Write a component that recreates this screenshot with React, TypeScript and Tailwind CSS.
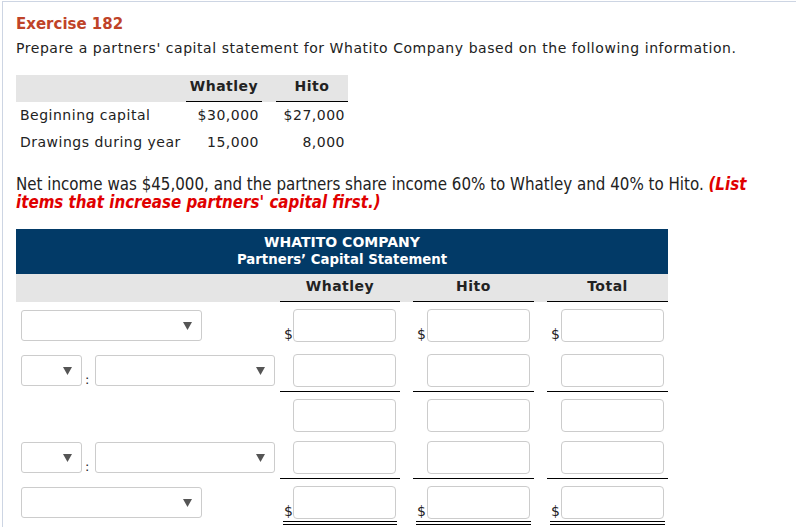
import React from "react";

function Caret() {
  return (
    <svg width="9" height="8" viewBox="0 0 9 8" className="shrink-0">
      <polygon points="0,0 9,0 4.5,8" fill="#555555" />
    </svg>
  );
}

function Select({ size }: { size: "lg" | "sm" | "md" }) {
  const w = size === "lg" ? "w-[181px]" : size === "md" ? "w-[180px]" : "w-[61px]";
  return (
    <div className={`${w} h-[31px] bg-white border border-[#cccccc] rounded-[3px] flex items-center justify-end pr-[9px]`}>
      <Caret />
    </div>
  );
}

type Row = { label: "one" | "two" | "none"; dollar: boolean; line: "none" | "single" | "double"; pb: string };

const rows: Row[] = [
  { label: "one", dollar: true, line: "none", pb: "pb-[4px]" },
  { label: "two", dollar: false, line: "single", pb: "pb-[4px]" },
  { label: "none", dollar: false, line: "none", pb: "pb-[1px]" },
  { label: "two", dollar: false, line: "single", pb: "pb-[4px]" },
  { label: "one", dollar: true, line: "double", pb: "pb-[2px]" },
];

function Money({ row, w }: { row: Row; w: string }) {
  const border =
    row.line === "single" ? "border-b border-black" : "border-b border-transparent";
  return (
    <div className={`${w} ${border} pt-[7px]`}>
      <div className={`${row.pb} flex items-end pl-[4px] pr-[4px]`}>
        <span className="w-[9px] text-[14px] leading-[16px] text-[#222]">{row.dollar ? "$" : ""}</span>
        <div className="ml-auto w-[103px] h-[33px] border border-[#cccccc] rounded-[4px] bg-white" />
      </div>
      {row.line === "double" && <div className="mx-[3px] h-[4px] border-y border-black" />}
    </div>
  );
}

export default function App() {
  return (
    <div className="min-h-screen bg-white pl-[2px] pt-[1px] font-['DejaVu_Sans',Verdana,sans-serif] text-[#222]">
      <div className="border-l border-t border-[#cdd5e3] min-h-[526px] pl-[13px] pt-[12px]">
        <h2 className="text-[15px] leading-[20px] font-bold text-[#bf4328]">Exercise 182</h2>
        <p className="mt-[4px] text-[14px] leading-[20px] tracking-[0.55px]">
          Prepare a partners' capital statement for Whatito Company based on the following information.
        </p>

        {/* given data */}
        <div className="mt-[17px] w-[332px] text-[14px] tracking-[0.5px]">
          <div className="flex h-[27px] bg-[#e5e5e5] font-bold">
            <div className="w-[170px]" />
            <div className="w-[76px] pb-[3px] border-b border-black flex items-center justify-center">Whatley</div>
            <div className="w-[14px]" />
            <div className="w-[72px] pb-[3px] border-b border-black flex items-center justify-center">Hito</div>
          </div>
          <div className="flex h-[27px] items-center">
            <div className="w-[170px] pl-[4px]">Beginning capital</div>
            <div className="w-[76px] text-right pr-[3px]">$30,000</div>
            <div className="w-[14px]" />
            <div className="w-[72px] text-right pr-[3px]">$27,000</div>
          </div>
          <div className="flex h-[27px] items-center">
            <div className="w-[170px] pl-[4px]">Drawings during year</div>
            <div className="w-[76px] text-right pr-[3px]">15,000</div>
            <div className="w-[14px]" />
            <div className="w-[72px] text-right pr-[3px]">8,000</div>
          </div>
        </div>

        <p className="mt-[20px] w-[760px] text-[16.8px] leading-[17.5px] font-['DejaVu_Sans_Condensed','Liberation_Sans_Narrow','DejaVu_Sans',sans-serif] [font-stretch:condensed]">
          Net income was $45,000, and the partners share income 60% to Whatley and 40% to Hito.{" "}
          <span className="font-bold italic text-[#e00000]">(List items that increase partners' capital first.)</span>
        </p>

        {/* statement */}
        <div className="mt-[18px] w-[652px]">
          <div className="bg-[#023a67] h-[45px] pt-[4px] text-center text-white font-bold leading-[18px]">
            <div className="text-[14px]">WHATITO COMPANY</div>
            <div className="text-[13.3px]">Partners’ Capital Statement</div>
          </div>
          <div className="flex h-[28px] bg-[#e5e5e5] font-bold text-[14px] tracking-[0.5px]">
            <div className="w-[264px]" />
            <div className="w-[120px] pb-[3px] border-b border-black flex items-center justify-center">Whatley</div>
            <div className="w-[13px]" />
            <div className="w-[121px] pb-[3px] border-b border-black flex items-center justify-center">Hito</div>
            <div className="w-[13px]" />
            <div className="w-[121px] pb-[3px] border-b border-black flex items-center justify-center">Total</div>
          </div>
          {rows.map((row, i) => (
            <div key={i} className="flex">
              <div className="w-[264px] pl-[5px] pt-[8px]">
                {row.label === "one" && <Select size="lg" />}
                {row.label === "two" && (
                  <div className="flex items-end">
                    <Select size="sm" />
                    <span className="w-[13px] pl-[3px] text-[13px] leading-[12px]">:</span>
                    <Select size="md" />
                  </div>
                )}
              </div>
              <Money row={row} w="w-[120px]" />
              <div className="w-[13px]" />
              <Money row={row} w="w-[121px]" />
              <div className="w-[13px]" />
              <Money row={row} w="w-[121px]" />
            </div>
          ))}
        </div>
      </div>
    </div>
  );
}
